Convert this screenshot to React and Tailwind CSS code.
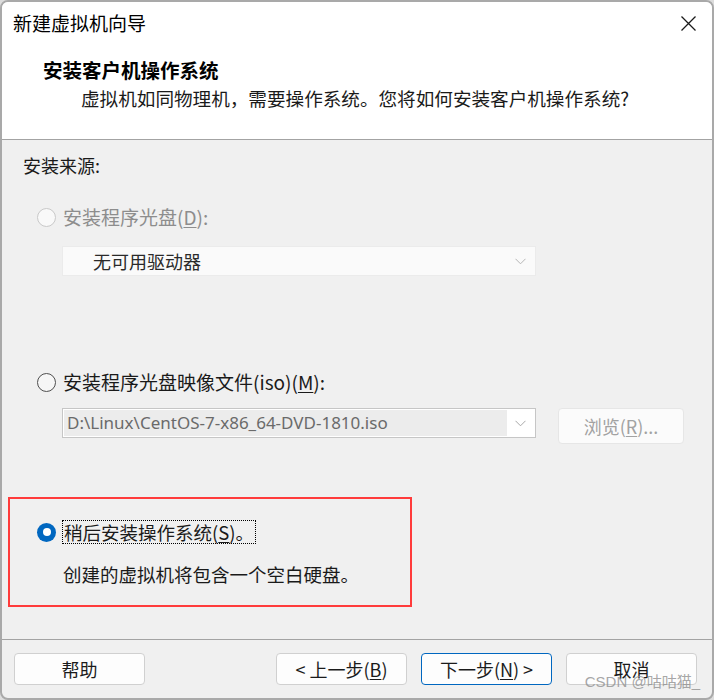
import React from "react";

const cjk = { fontFamily: '"Noto Sans CJK SC", "Noto Sans", sans-serif' };

function Chevron({ color = "#b5b5b5" }) {
  return (
    <svg width="11" height="7" viewBox="0 0 11 7" fill="none">
      <path d="M0.5 0.8 L5.5 5.8 L10.5 0.8" stroke={color} strokeWidth="1" />
    </svg>
  );
}

function Radio({ state }) {
  if (state === "checked") {
    return (
      <span className="w-[19px] h-[19px] rounded-full bg-[#0067c0] flex items-center justify-center shrink-0">
        <span className="w-[8px] h-[8px] rounded-full bg-white" />
      </span>
    );
  }
  if (state === "disabled") {
    return <span className="w-[19px] h-[19px] rounded-full border border-[#c9c9c9] bg-[#f9f9f9] shrink-0" />;
  }
  return <span className="w-[19px] h-[19px] rounded-full border border-[#4f4f4f] bg-[#f6f6f6] shrink-0" />;
}

function Button({ children, primary }) {
  return (
    <button
      className={
        "w-[131px] h-[32px] rounded-[4px] bg-[#fdfdfd] text-[18px] leading-6 text-[#1b1b1b] flex items-center justify-center " +
        (primary ? "border-[1.5px] border-[#0067c0]" : "border border-[#d0d0d0]")
      }
    >
      {children}
    </button>
  );
}

export default function App() {
  return (
    <div className="w-[714px] h-[700px] bg-[#dcdcdc] overflow-hidden" style={cjk}>
      <div className="relative w-[714px] h-[700px] rounded-lg border-2 border-[#a9a9a9] bg-[#f0f0f0] overflow-hidden flex flex-col">
        {/* Header */}
        <div className="h-[138px] bg-white border-b border-[#a3a3a3] shrink-0">
          <div className="h-[42px] flex items-center justify-between pl-[11px] pr-[16px]">
            <span className="text-[19px] leading-6 text-black">新建虚拟机向导</span>
            <svg width="15" height="15" viewBox="0 0 15 15">
              <path d="M0.5 0.5 L14.5 14.5 M14.5 0.5 L0.5 14.5" stroke="#1a1a1a" strokeWidth="1.3" />
            </svg>
          </div>
          <div className="mt-[13px] pl-[41px] text-[19.5px] leading-[26px] font-bold text-black">安装客户机操作系统</div>
          <div className="mt-[2px] pl-[79px] text-[18.6px] leading-[26px] text-[#1a1a1a]">
            虚拟机如同物理机，需要操作系统。您将如何安装客户机操作系统?
          </div>
        </div>

        {/* Body */}
        <div className="flex-1 flex flex-col pt-[13px]">
          <div className="pl-[21px] text-[18px] leading-6 text-[#1a1a1a]">安装来源:</div>

          <div className="mt-[28px] ml-[35px] flex items-center gap-[7px] h-6">
            <Radio state="disabled" />
            <span className="text-[19px] leading-6 text-[#8d8d8d]">
              安装程序光盘(<span className="underline underline-offset-2">D</span>):
            </span>
          </div>

          <div className="mt-[17px] ml-[60px] w-[474px] h-[30px] bg-[#fafafa] border border-[#ebebeb] flex items-center justify-between pl-[30px] pr-[9px]">
            <span className="text-[18px] leading-6 text-[#2a2a2a]">无可用驱动器</span>
            <Chevron />
          </div>

          <div className="mt-[94px] ml-[35px] flex items-center gap-[7px] h-6">
            <Radio state="off" />
            <span className="text-[19px] leading-6 text-[#1a1a1a]">
              安装程序光盘映像文件(iso)(<span className="underline underline-offset-2">M</span>):
            </span>
          </div>

          <div className="mt-[14px] ml-[60px] flex items-start gap-[22px]">
            <div className="w-[474px] h-[30px] bg-white border border-[#c6c6c6] flex items-center p-px pr-[9px]">
              <div className="w-[443px] h-full bg-[#ececec] flex items-center pl-[3px]">
                <span
                  className="text-[17px] leading-6 text-[#6a6a6a]"
                  style={{ fontFamily: '"Noto Sans", "Open Sans", sans-serif' }}
                >
                  D:\Linux\CentOS-7-x86_64-DVD-1810.iso
                </span>
              </div>
              <div className="flex-1 flex justify-end">
                <Chevron color="#a8a8a8" />
              </div>
            </div>
            <div className="w-[126px] h-[36px] rounded-[4px] bg-[#fbfbfb] border border-[#e6e6e6] flex items-center justify-center text-[18px] leading-6 text-[#a2a2a2]">
              浏览(<span className="underline underline-offset-2">R</span>)...
            </div>
          </div>

          <div className="mt-[53px] ml-[6px] w-[404px] h-[110px] border-[2.5px] border-[#ff3b3b] pt-[21px]">
            <div className="ml-[27px] flex items-center gap-[6px] h-6">
              <Radio state="checked" />
              <span className="border border-dotted border-black px-px text-[18.5px] leading-[22px] text-[#1a1a1a]">
                稍后安装操作系统(<span className="underline underline-offset-2">S</span>)。
              </span>
            </div>
            <div className="mt-[18px] ml-[53px] text-[18.5px] leading-6 text-[#1a1a1a]">创建的虚拟机将包含一个空白硬盘。</div>
          </div>
        </div>

        {/* Footer */}
        <div className="h-[59px] shrink-0 border-t border-[#a3a3a3] pt-[13px] pl-[12px] pr-[15px] flex items-start">
          <Button>帮助</Button>
          <div className="flex-1" />
          <div className="flex gap-[14px]">
            <Button>
              &lt; 上一步(<span className="underline underline-offset-2">B</span>)
            </Button>
            <Button primary>
              下一步(<span className="underline underline-offset-2">N</span>) &gt;
            </Button>
            <Button>取消</Button>
          </div>
        </div>

        <div
          className="absolute right-[12px] bottom-[6px] text-[15px] leading-5 text-[#8f8f8f]/80"
          style={{ fontFamily: '"Liberation Sans", "Noto Sans CJK SC", sans-serif' }}
        >
          CSDN @咕咕猫_
        </div>
      </div>
    </div>
  );
}
